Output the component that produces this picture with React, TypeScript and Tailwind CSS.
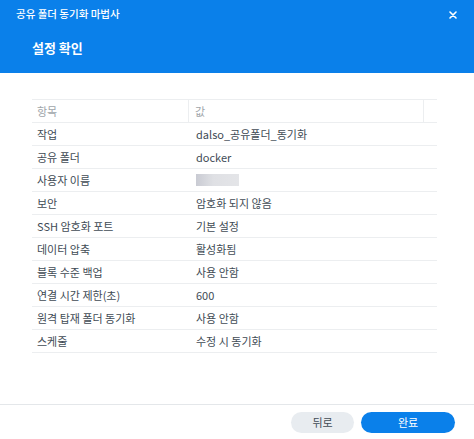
import React from "react";

const rows: [string, string | null][] = [
  ["작업", "dalso_공유폴더_동기화"],
  ["공유 폴더", "docker"],
  ["사용자 이름", null],
  ["보안", "암호화 되지 않음"],
  ["SSH 암호화 포트", "기본 설정"],
  ["데이터 압축", "활성화됨"],
  ["블록 수준 백업", "사용 안함"],
  ["연결 시간 제한(초)", "600"],
  ["원격 탑재 폴더 동기화", "사용 안함"],
  ["스케줄", "수정 시 동기화"],
];

export default function App() {
  return (
    <div
      className="w-[474px] h-[439px] bg-white flex flex-col overflow-hidden"
      style={{ fontFamily: '"Noto Sans CJK KR", "Noto Sans", sans-serif' }}
    >
      <div className="h-[73px] bg-[#0a80ea] flex flex-col text-white">
        <div className="flex items-center justify-between pl-[16px] pr-[17px] pt-[7px] h-[22px]">
          <span className="text-[10.5px] font-medium leading-none">공유 폴더 동기화 마법사</span>
          <svg width="8" height="8" viewBox="0 0 8 8" className="mt-[1px]">
            <path d="M1 1L7 7M7 1L1 7" stroke="white" strokeWidth="1.6" strokeLinecap="round" />
          </svg>
        </div>
        <div className="pl-[32px] pt-[19px] text-[13px] font-bold leading-none">설정 확인</div>
      </div>
      <div className="flex-1 pt-[26px] px-[32px]">
        <div className="w-[405px] text-[11px] text-[#414b55]">
          <div className="flex h-[24px] border-y border-[#eceef0] text-[#a0a5aa]">
            <div className="w-[157px] pl-[5px] flex items-center border-r border-[#eceef0]">항목</div>
            <div className="w-[235px] pl-[6px] flex items-center border-r border-[#eceef0]">값</div>
            <div className="flex-1" />
          </div>
          {rows.map(([k, v]) => (
            <div key={k} className="flex h-[23px] border-b border-[#eceef0]">
              <div className="w-[158px] pl-[5px] flex items-center">{k}</div>
              <div className="flex-1 pl-[6px] flex items-center">
                {v === null ? (
                  <div className="w-[43px] h-[12px] bg-[linear-gradient(90deg,#c9cbd3,#dfe0e4_40%,#e4e5e8)] blur-[0.6px]" />
                ) : (
                  v
                )}
              </div>
            </div>
          ))}
        </div>
      </div>
      <div className="h-[35px] border-t border-[#e4e7ea] flex justify-end items-start pt-[7px] pr-[19px] gap-[7px]">
        <button className="w-[63px] h-[21px] rounded-full bg-[#e8ecf0] text-[#414b55] text-[11px] flex items-center justify-center">
          뒤로
        </button>
        <button className="w-[94px] h-[21px] rounded-full bg-[#0a80ea] text-white text-[11px] flex items-center justify-center">
          완료
        </button>
      </div>
    </div>
  );
}
